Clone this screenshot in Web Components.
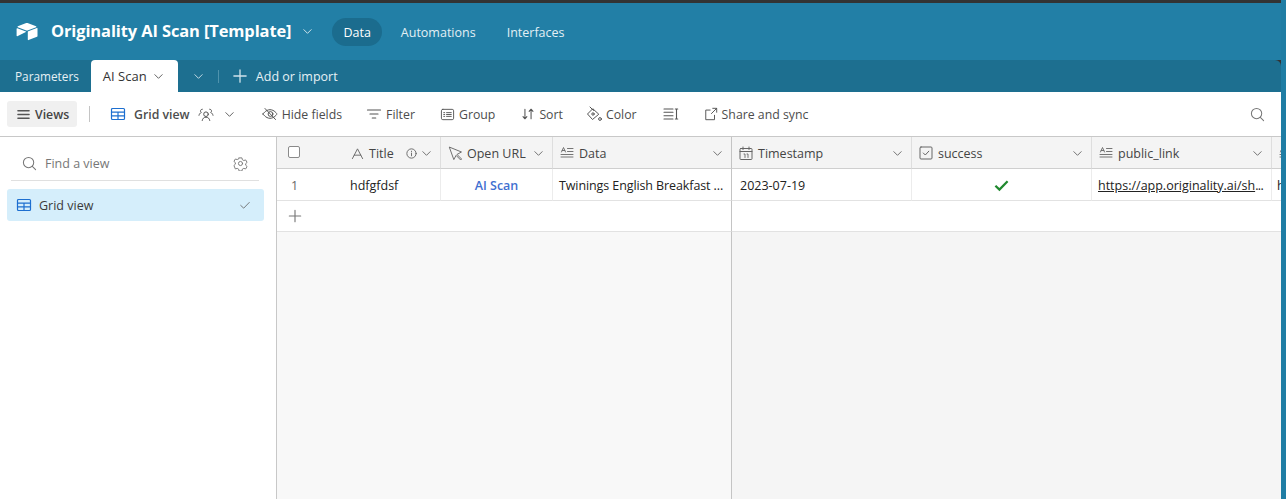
<!DOCTYPE html>
<html><head><meta charset="utf-8">
<style>
html,body{margin:0;padding:0;height:100%;overflow:hidden;background:#1f7da4}
body{font-family:"Open Sans","Noto Sans",sans-serif}
app-shell{width:1281px;height:499px}
</style></head><body>
<template id="t-ic">
<style>:host{display:inline-flex;flex:none;align-items:center;justify-content:center}svg{display:block}</style>
<svg fill="none" stroke="currentColor" stroke-width="1" stroke-linecap="round" stroke-linejoin="round"></svg>
</template>
<app-shell></app-shell>
<script>
const ICONS={
chev:[12,12,'<path d="M2 4l4 4 4-4"/>'],
grid:[16,16,'<rect x="1.500" y="2.500" width="13" height="11" rx="1" stroke-width="1.200"/><path d="M1.500 6.200h13M1.500 9.800h13M8 6.200v7.300" stroke-width="1.200"/>'],
menu:[16,16,'<path d="M2 4h12M2 8h12M2 12h12" stroke-width="1.400"/>'],
people:[16,16,'<circle cx="8" cy="8.200" r="2.300"/><path d="M4.200 14.500c.3-2 1.800-3.300 3.800-3.300s3.500 1.300 3.800 3.300"/><path d="M4.300 3.200a1.800 1.800 0 0 0-1 3.300c-1.200.5-2 1.500-2.300 2.800M11.700 3.200a1.800 1.800 0 0 1 1 3.300c1.200.5 2 1.500 2.300 2.800"/>'],
eye:[16,16,'<path d="M1 8s2.600-4.300 7-4.300S15 8 15 8s-2.600 4.300-7 4.300S1 8 1 8z"/><circle cx="8.500" cy="8" r="2.400"/><path d="M3 2.500l10.500 11"/>'],
filter:[16,16,'<path d="M1.500 4h13M4 8h8M6.300 12h3.400" stroke-width="1.200"/>'],
group:[16,16,'<rect x="1.500" y="2.500" width="13" height="11" rx="1.500"/><path d="M4 6h1M7 6h5M4 8h1M7 8h5M4 10h1M7 10h5"/>'],
sort:[16,16,'<path d="M4.500 2.500v11M2.300 11L4.500 13.500 6.700 11M11.500 13.500v-11M9.300 5L11.500 2.500 13.700 5" stroke-width="1.200"/>'],
color:[16,16,'<path d="M6.500 3L1.500 8l5 5.500L12.500 8.500z"/><path d="M4 1l3.500 3.500"/><circle cx="7" cy="8" r="1.200"/><circle cx="14" cy="13" r="1.400"/>'],
height:[16,16,'<path d="M1 3h9M1 6.300h9M1 9.700h9M1 13h9M13.500 3v10M12.300 3h2.400M12.300 13h2.400" stroke-width="1.100"/>'],
share:[16,16,'<path d="M7 3.500H2v11h10V9.500M8.500 7.500L14.500 1.500M10 1.500h4.500V6" stroke-width="1.100"/>'],
search:[16,16,'<circle cx="7" cy="7" r="5.500" stroke-width="1.100"/><path d="M11 11l3.500 3.500" stroke-width="1.100"/>'],
gear:[16,16,'<path d="M6.500 1.500h3l.5 2 1.500.8 2-.6 1.500 2.600-1.500 1.400v1.600l1.500 1.400-1.500 2.600-2-.6-1.500.8-.5 2h-3l-.5-2-1.500-.8-2 .6L1 9.600l1.500-1.400V6.600L1 5.300l1.500-2.600 2 .6L6 2.500z" transform="translate(0 .5)"/><circle cx="8" cy="8" r="2.200"/>'],
check:[14,14,'<path d="M2 7.500l3.500 3.200 6.500-6.700"/>'],
checkG:[16,16,'<path d="M1.500 8.200l4.300 4.200L14.500 3.500" stroke-width="2.400" stroke-linecap="butt" stroke-linejoin="miter"/>'],
plus:[16,16,'<path d="M8 1.500v13M1.500 8h13" stroke-width="1.300"/>'],
plusW:[16,16,'<path d="M8 1v14M1 8h14" stroke-width="1.500"/>'],
textA:[14,14,'<path d="M1.500 12.500L7 2l5.500 10.500M3.500 8.800h7" stroke-width="1"/>'],
info:[14,14,'<circle cx="7" cy="7" r="5"/><path d="M7 6.500v3M7 4.500v.4"/>'],
cursor:[16,16,'<path d="M1.500 1.500l4.700 13 2.400-4.500 4.900 4.900 1-1-4.900-4.900 4.400-2.400z" stroke-width="1"/>'],
longtext:[14,14,'<path d="M1.500 6L3.500 1.500l2 4.500M2.200 4.500h2.600M7.500 2.500h5.500M7.500 5.500h5.500M1 8.500h12M1 11h12" stroke-width=".9"/>'],
cal:[14,14,'<rect x="1" y="2.500" width="12" height="11" rx=".8"/><path d="M1 5.500h12M4 1v2.500M10 1v2.500"/><path d="M5 8h1v3.500M8 8h1v3.500" stroke-width=".9"/>'],
checkbox:[14,14,'<rect x="1" y="1" width="12" height="12" rx="1"/><path d="M4.300 7l2 2 3.500-3.800"/>']
};
class XIcon extends HTMLElement{
  constructor(){super();this.attachShadow({mode:'open'}).append(document.getElementById('t-ic').content.cloneNode(true));}
  connectedCallback(){
    const [w,h,p]=ICONS[this.getAttribute('n')];
    const s=+this.getAttribute('s')||w;
    const v=this.shadowRoot.querySelector('svg');
    v.setAttribute('viewBox',`0 0 ${w} ${h}`);v.setAttribute('width',s);v.setAttribute('height',s);v.innerHTML=p;
  }
}
customElements.define('x-icon',XIcon);
function el(name,css,html){
  customElements.define(name,class extends HTMLElement{
    constructor(){super();this.attachShadow({mode:'open'}).innerHTML=`<style>${css}</style>${html}`;}
  });
}
el('app-topbar',`:host{display:flex;align-items:center;height:57px;background:#227fa6;color:#fff;padding-left:16px;box-sizing:border-box}
.title{font-size:16.450px;font-weight:700;margin-left:13px;white-space:nowrap;letter-spacing:-.1px;padding-bottom:2px}
.tb{font-size:12.500px;padding:1px 11px 0;box-sizing:border-box;height:28px;display:flex;align-items:center;border-radius:14px;color:#e3f0f5}
.on{background:#1b6c8e;color:#fff;margin-left:19px}
x-icon{color:#dbeaf0}`,
`<svg width="22" height="19" viewBox="0 0 22 19"><path fill="#fff" d="M9.600 1.200 1.800 4.300c-.4.200-.4.700 0 .9l7.900 3.100c.8.300 1.700.3 2.500 0l7.900-3.100c.4-.2.400-.7 0-.9l-7.900-3.100c-.8-.3-1.800-.3-2.600 0z"/><path fill="#fff" d="M11.800 9.900v7.700c0 .4.400.6.700.5l8.500-3.300c.3-.1.500-.4.500-.7V6.400c0-.4-.4-.6-.7-.5l-8.500 3.300c-.3.100-.5.400-.5.700z"/><path fill="#fff" d="M9.900 10.100 1.300 14.200c-.3.200-.7-.1-.7-.4V6.700c0-.3.400-.6.700-.4l8.600 3.200c.3.100.3.500 0 .6z"/></svg>
<span class="title">Originality AI Scan [Template]</span>
<x-icon n="chev" s="11" style="margin-left:11px"></x-icon>
<span class="tb on">Data</span><span class="tb" style="margin-left:8px">Automations</span><span class="tb" style="margin-left:9px">Interfaces</span>`);
el('app-tabbar',`:host{display:flex;align-items:stretch;height:32px;background:#1d6f90;color:#e6f1f5;font-size:12.500px;box-sizing:border-box;border-radius:0 6px 0 0}
.t{display:flex;align-items:center;padding:0 12px 0 15px}
.a{background:#fff;color:#333;border-radius:4px 4px 0 0;padding:0 14px 0 12px;width:87px;box-sizing:border-box;justify-content:space-between;font-size:13px}
.d{width:1px;height:13px;background:#4f93ad;align-self:center;margin:0 14px 0 0}
x-icon{color:#cfe2ea}`,
`<span class="t" style="padding-right:12px;font-size:11.800px">Parameters</span><span class="t a">AI Scan<x-icon n="chev" s="11" style="color:#555"></x-icon></span>
<span class="t" style="padding:0 14px 0 15px"><x-icon n="chev" s="11"></x-icon></span><span class="d"></span>
<span class="t" style="padding:0"><x-icon n="plusW" s="14"></x-icon><span style="margin-left:9px">Add or import</span></span>`);
el('app-toolbar',`:host{display:flex;align-items:center;height:45px;background:#fff;color:#4d4d4d;font-size:12.300px;box-sizing:border-box;padding-left:7px;border-bottom:1px solid #c8c8c8}
.views{display:flex;align-items:center;gap:4px;height:26px;width:70px;padding:0 0 0 9px;box-sizing:border-box;background:#f0f0f0;border-radius:3px;color:#444;font-weight:600}
.sep{width:1px;height:16px;background:#c4c4c4;margin:0 20px 0 12px}
.i{display:flex;align-items:center;gap:4px;white-space:nowrap}
x-icon{color:#555}
.grow{flex:1}`,
`<span class="views"><x-icon n="menu" s="15"></x-icon>Views</span><span class="sep"></span>
<span class="i" style="font-weight:600;gap:0"><x-icon n="grid" s="16" style="color:#1d6fd0"></x-icon><span style="margin-left:8px">Grid view</span><x-icon n="people" s="16" style="margin-left:8px"></x-icon><x-icon n="chev" s="11" style="margin-left:10px"></x-icon></span>
<span class="i" style="margin-left:27px"><x-icon n="eye" s="16"></x-icon>Hide fields</span>
<span class="i" style="margin-left:24px"><x-icon n="filter" s="16"></x-icon>Filter</span>
<span class="i" style="margin-left:25px"><x-icon n="group" s="15"></x-icon>Group</span>
<span class="i" style="margin-left:26px"><x-icon n="sort" s="14"></x-icon>Sort</span>
<span class="i" style="margin-left:23px"><x-icon n="color" s="16"></x-icon>Color</span>
<span class="i" style="margin-left:26px"><x-icon n="height" s="16"></x-icon></span>
<span class="i" style="margin-left:25px"><x-icon n="share" s="14"></x-icon>Share and sync</span>
<span class="grow"></span><x-icon n="search" s="15" style="margin-right:16px;color:#777"></x-icon>`);
el('app-sidebar',`:host{display:block;width:276px;flex:none;background:#fff;border-right:1px solid #c8c8c8;box-sizing:content-box;font-size:12.500px;color:#333}
.find{display:flex;align-items:center;height:34px;padding-top:1px;margin:8px 17px 0 11px;padding-left:11px;border-bottom:1px solid #e0e0e0;color:#777}
.find span{margin-left:8px;flex:1}
.item{display:flex;align-items:center;height:32px;margin:8px 12px 0 7px;background:#d5eefb;border-radius:3px;padding:0 13px 0 9px;font-weight:500;color:#3a3a3a}
.item span{flex:1;margin-left:7px}`,
`<div class="find"><x-icon n="search" s="15"></x-icon><span>Find a view</span><x-icon n="gear" s="15" style="margin-right:11px"></x-icon></div>
<div class="item"><x-icon n="grid" s="16" style="color:#1d6fd0"></x-icon><span>Grid view</span><x-icon n="check" s="12" style="color:#666"></x-icon></div>`);
el('grid-head',`:host{display:flex;align-items:center;box-sizing:border-box;height:100%;padding:1px 8px 0 7px;color:#444;font-size:12.500px;border-right:1px solid #dedede;overflow:hidden;gap:5px;background:#f4f4f4}
::slotted(x-icon){color:#666}`,`<slot></slot>`);
el('grid-cell',`:host{display:flex;align-items:center;box-sizing:border-box;height:100%;padding:1px 6px 0;color:#222;font-size:12.500px;border-right:1px solid #ececec;overflow:hidden;white-space:nowrap}`,`<slot></slot>`);
el('data-grid',`:host{display:grid;flex:1;min-width:0;overflow:hidden;background:#f5f5f5;grid-template-rows:32px 32px 31px 1fr;grid-template-columns:164px 112px 179px 180px 180px 180px 180px;color:#333;align-content:start}
::slotted(.r1){border-bottom:1px solid #cfcfcf}
::slotted(.r2){border-bottom:1px solid #e2e2e2}
::slotted(.r3){border-bottom:1px solid #e2e2e2;background:#fff}
::slotted(.fz){border-right:1px solid #c4c4c4 !important}`,`<slot></slot>`);
el('app-shell',`:host{display:flex;flex-direction:column;position:relative;padding-top:3px;box-sizing:border-box;background:#333}
.main{display:flex;flex:1;min-height:0;background:#fff}`,
`<app-topbar></app-topbar><app-tabbar></app-tabbar><app-toolbar></app-toolbar><div class="main"><app-sidebar></app-sidebar><slot></slot></div>`);
const hd=(i,t,s=14,g=5)=>`<x-icon n="${i}" s="${s}"></x-icon><span style="flex:1;white-space:nowrap;margin-left:${g-5}px">${t}</span><x-icon n="chev" s="11"></x-icon>`;
document.querySelector('app-shell').innerHTML=`<data-grid>
<grid-head class="r1" style="padding-left:11px;gap:0"><span style="width:10px;height:10px;border:1px solid #8a8a8a;border-radius:2px;background:#fff;flex:none;margin-top:-2px"></span><span style="width:51px;flex:none"></span><x-icon n="textA" s="13"></x-icon><span style="flex:1;margin-left:5px">Title</span><x-icon n="info" s="13"></x-icon><x-icon n="chev" s="11" style="margin-left:3px"></x-icon></grid-head>
<grid-head class="r1">${hd('cursor','Open URL',15,4)}</grid-head>
<grid-head class="r1 fz">${hd('longtext','Data')}</grid-head>
<grid-head class="r1">${hd('cal','Timestamp')}</grid-head>
<grid-head class="r1">${hd('checkbox','success')}</grid-head>
<grid-head class="r1">${hd('longtext','public_link')}</grid-head>
<grid-head class="r1"><x-icon n="longtext" s="14"></x-icon></grid-head>

<grid-cell class="r2" style="background:#fff;padding-left:0;padding-right:0"><span style="width:73px;padding-left:14px;box-sizing:border-box;color:#666;flex:none">1</span>hdfgfdsf</grid-cell>
<grid-cell class="r2" style="background:#fff;justify-content:center;color:#3f6fd0;font-weight:600">AI Scan</grid-cell>
<grid-cell class="r2 fz" style="background:#fff"><span style="letter-spacing:-.1px">Twinings English Breakfast ...</span></grid-cell>
<grid-cell class="r2" style="background:#fff;padding-left:8px">2023-07-19</grid-cell>
<grid-cell class="r2" style="background:#fff;justify-content:center"><x-icon n="checkG" s="15" style="color:#20892f"></x-icon></grid-cell>
<grid-cell class="r2" style="background:#fff"><span style="text-decoration:underline">https://app.originality.ai/sh</span><span style="letter-spacing:-.6px">...</span></grid-cell>
<grid-cell class="r2" style="background:#fff;padding-left:5px">h</grid-cell>

<grid-cell class="r3" style="padding-left:11px;padding-top:0;border-right:0;grid-column:1/3"><x-icon n="plus" s="14" style="color:#777"></x-icon></grid-cell>
<grid-cell class="r3 fz" style="border-right:1px solid #c4c4c4"></grid-cell>
<grid-cell class="r3" style="grid-column:4/8;border-right:0"></grid-cell>
<div class="fz" style="grid-column:1/4;background:#f8f8f8;border-right:1px solid #c4c4c4"></div>
<div style="grid-column:4/8;background:#f5f5f5"></div>
</data-grid>`;
</script>
</body></html>
